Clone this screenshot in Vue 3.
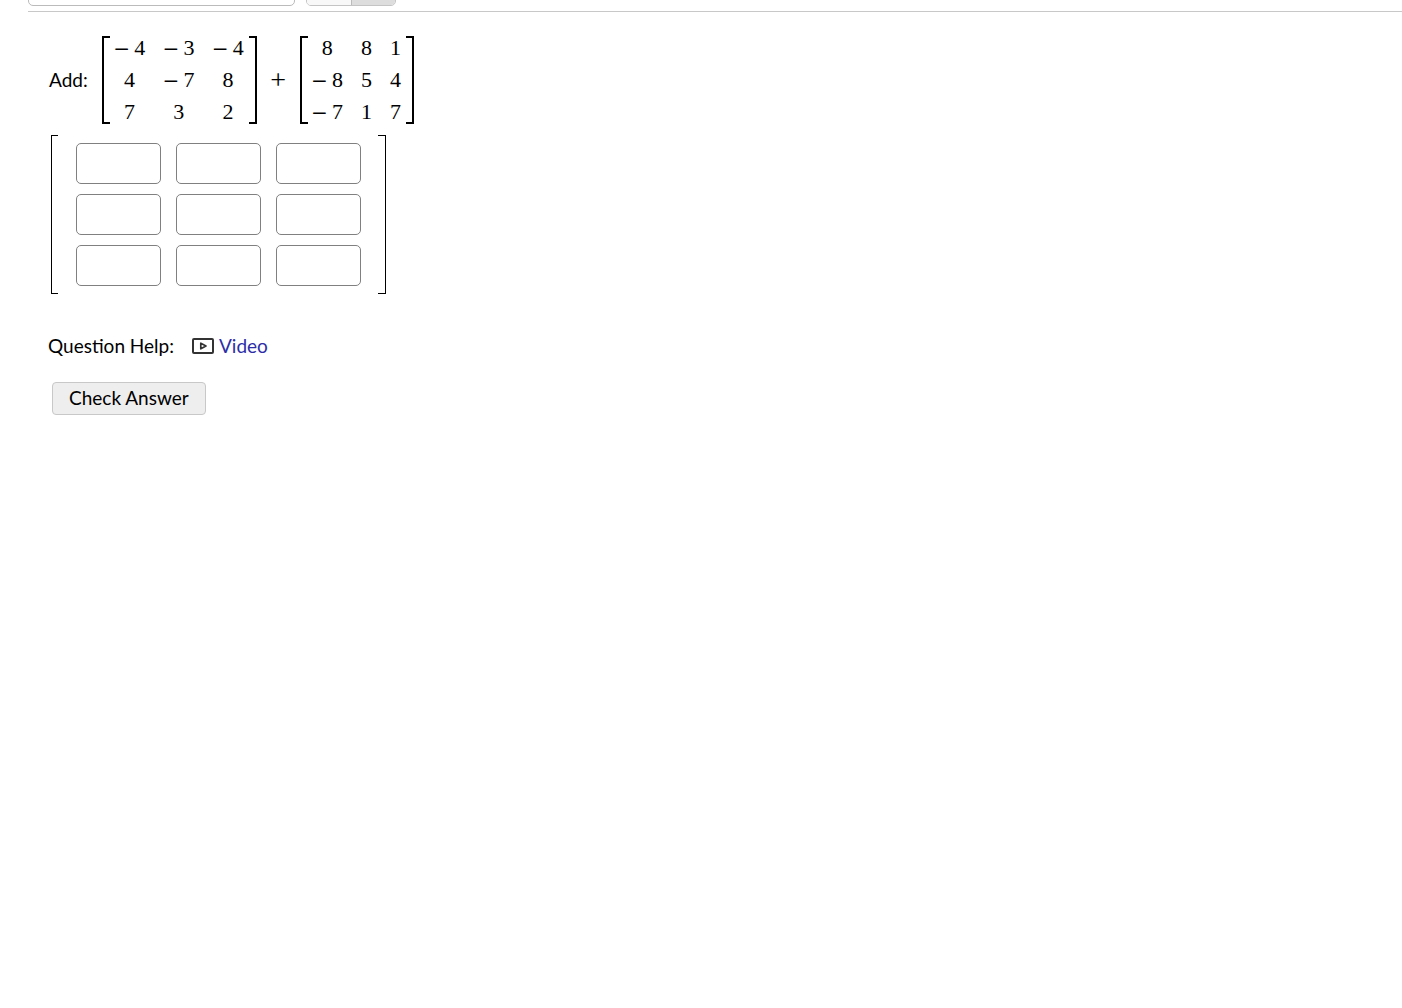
<script setup>
import { ref } from 'vue'

const first = [[-4, -3, -4], [4, -7, 8], [7, 3, 2]]
const second = [[8, 8, 1], [-8, 5, 4], [-7, 1, 7]]
const answer = ref([['', '', ''], ['', '', ''], ['', '', '']])
</script>

<template>
  <header class="toolbar">
    <input class="search" type="text" aria-label="Search" />
    <div class="toggle">
      <button type="button" aria-label="Previous"></button>
      <button type="button" class="active" aria-label="Next"></button>
    </div>
  </header>

  <main class="question">
    <div class="problem">
      <span class="label">Add:</span>
      <div class="matrix">
        <span class="bracket left"></span>
        <table>
          <tbody>
            <tr v-for="(row, r) in first" :key="r">
              <td v-for="(n, c) in row" :key="c"><span v-if="n < 0" class="minus">−</span>{{ Math.abs(n) }}</td>
            </tr>
          </tbody>
        </table>
        <span class="bracket right"></span>
      </div>
      <span class="plus">+</span>
      <div class="matrix">
        <span class="bracket left"></span>
        <table>
          <tbody>
            <tr v-for="(row, r) in second" :key="r">
              <td v-for="(n, c) in row" :key="c"><span v-if="n < 0" class="minus">−</span>{{ Math.abs(n) }}</td>
            </tr>
          </tbody>
        </table>
        <span class="bracket right"></span>
      </div>
    </div>

    <div class="answer">
      <span class="edge left"></span>
      <table>
        <tbody>
          <tr v-for="(row, r) in answer" :key="r">
            <td v-for="(_, c) in row" :key="c">
              <input v-model="row[c]" type="text" :aria-label="`Row ${r + 1}, column ${c + 1}`" />
            </td>
          </tr>
        </tbody>
      </table>
      <span class="edge right"></span>
    </div>

    <div class="help">
      <span>Question Help:</span>
      <a href="#video">
        <svg width="22" height="18" viewBox="0 0 22 18" fill="none" stroke="#333" stroke-width="2" stroke-linejoin="round" aria-hidden="true">
          <rect x="1" y="2" width="20" height="14" rx="1" />
          <path d="M8.8 6.2v5.6L14 9z" stroke-width="1.7" />
        </svg>
        Video
      </a>
    </div>

    <button type="button" class="check">Check Answer</button>
  </main>
</template>

<style>
body {
  margin: 0;
  background: #fff;
}
</style>

<style scoped>
* {
  box-sizing: border-box;
}
.toolbar {
  display: flex;
  align-items: flex-end;
  gap: 11px;
  height: 12px;
  margin-left: 28px;
  padding-bottom: 5px;
  border-bottom: 1px solid #c8c8c8;
  overflow: hidden;
}
.search {
  flex: none;
  width: 267px;
  height: 34px;
  border: 1px solid #bbb;
  border-radius: 5px;
  background: #fff;
}
.toggle {
  display: flex;
  flex: none;
  height: 34px;
  border: 1px solid #c4c4c4;
  border-radius: 5px;
  overflow: hidden;
}
.toggle button {
  width: 44px;
  padding: 0;
  border: 0;
  background: #f8f8f8;
}
.toggle .active {
  border-left: 1px solid #bbb;
  background: #ddd;
}
.question {
  padding: 24px 48px;
  font: 19px/24px "Trebuchet MS", Lato, sans-serif;
  color: #000;
}
.problem {
  display: flex;
  align-items: center;
}
.label {
  width: 54px;
  padding-left: 1px;
}
.matrix {
  display: flex;
  font: 22px/32px "Liberation Serif", serif;
}
.matrix table {
  margin: -4px 5px -4px 4px;
  border-spacing: 0;
}
.matrix td {
  padding: 0 0 0 18px;
  height: 32px;
  text-align: center;
  white-space: nowrap;
}
.matrix td:first-child {
  padding-left: 0;
}
.minus {
  margin-right: 5px;
  font-size: 27px;
  line-height: 1px;
  vertical-align: -3px;
}
.bracket {
  width: 8px;
  border: 2px solid #000;
}
.left {
  border-right: 0;
}
.right {
  border-left: 0;
}
.plus {
  width: 43px;
  text-align: center;
  font: 28px/32px "Liberation Serif", serif;
}
.answer {
  display: flex;
  width: max-content;
  margin: 11px 0 0 3px;
}
.answer table {
  margin: 3px 9px 3px 11px;
  border-spacing: 0;
}
.answer td {
  padding: 5px 8px 5px 7px;
}
.answer input {
  display: block;
  width: 85px;
  height: 41px;
  padding: 4px 8px;
  border: 1px solid #808080;
  border-radius: 5px;
  background: #fff;
  font: inherit;
}
.edge {
  width: 7px;
  border: 1px solid #000;
}
.edge.left {
  border-right: 0;
}
.edge.right {
  width: 8px;
  border-left: 0;
}
.help {
  display: flex;
  gap: 18px;
  margin-top: 40px;
}
.help a {
  display: flex;
  align-items: center;
  gap: 5px;
  color: #2d2da8;
  text-decoration: none;
}
.check {
  display: block;
  height: 33px;
  margin: 24px 0 0 4px;
  padding: 0 16px 2px;
  border: 1px solid #c8c8c8;
  border-radius: 4px;
  background: #eee;
  font: inherit;
  color: #000;
}
</style>
